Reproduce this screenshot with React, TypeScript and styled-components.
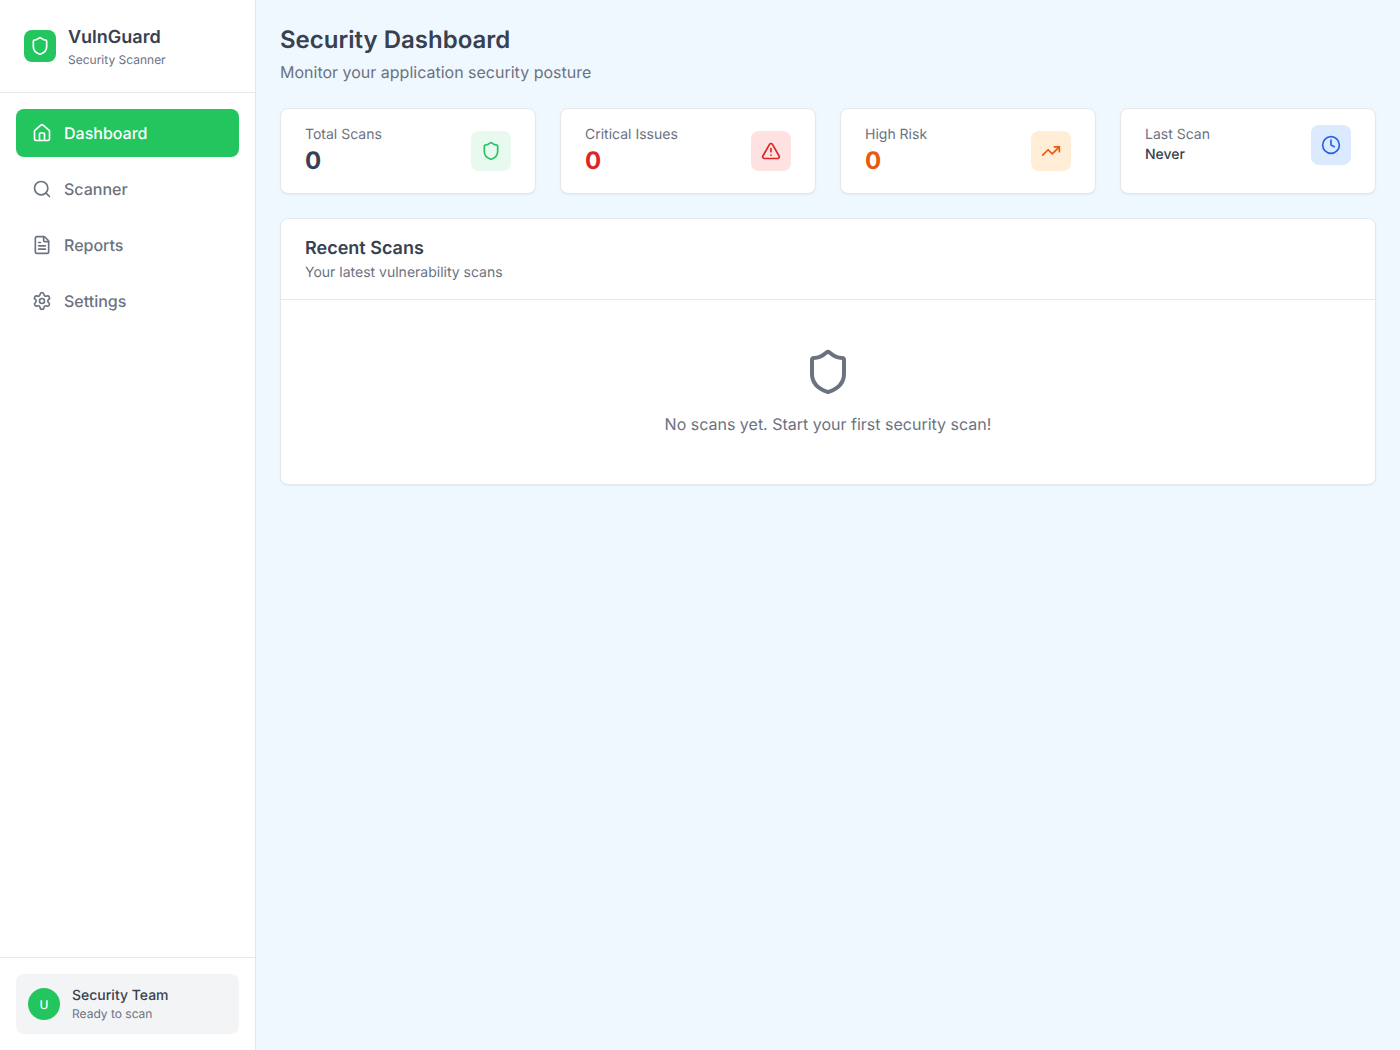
import React from 'react';
import styled, { createGlobalStyle } from 'styled-components';
import { Clock, FileText, House, Search, Settings, Shield, TrendingUp, TriangleAlert } from 'lucide-react';
import type { LucideIcon } from 'lucide-react';

const GlobalStyle = createGlobalStyle`
  html, body {
    margin: 0;
    padding: 0;
    height: 100%;
  }
  body {
    font-family: Inter, "Liberation Sans", sans-serif;
    text-rendering: geometricPrecision;
    -webkit-font-smoothing: antialiased;
    color: #374151;
    background: #f0f8ff;
  }
  * {
    box-sizing: border-box;
  }
`;

const Layout = styled.div`
  display: flex;
  height: 1050px;
  overflow: hidden;
`;

const Sidebar = styled.aside`
  display: flex;
  flex-direction: column;
  flex: none;
  width: 256px;
  background: #ffffff;
  border-right: 1px solid #e5e7eb;
`;

const Brand = styled.div`
  display: flex;
  align-items: center;
  gap: 12px;
  padding: 24px;
  border-bottom: 1px solid #e5e7eb;
`;

const BrandLogo = styled.div`
  display: flex;
  align-items: center;
  justify-content: center;
  width: 32px;
  height: 32px;
  border-radius: 8px;
  background: #22c55e;
  color: #ffffff;
`;

const BrandName = styled.div`
  font-size: 18px;
  line-height: 28px;
  font-weight: 600;
  color: #374151;
`;

const BrandTag = styled.div`
  font-size: 12px;
  line-height: 16px;
  color: #6b7280;
`;

const Nav = styled.nav`
  display: flex;
  flex-direction: column;
  flex: 1;
  gap: 8px;
  padding: 16px;
`;

const NavItem = styled.a<{ $active?: boolean }>`
  display: flex;
  align-items: center;
  gap: 12px;
  padding: 12px 16px;
  border-radius: 8px;
  font-size: 16px;
  line-height: 24px;
  font-weight: 500;
  cursor: pointer;
  background: ${props => (props.$active ? '#22c55e' : 'transparent')};
  color: ${props => (props.$active ? '#ffffff' : '#6b7280')};
`;

const SidebarFooter = styled.div`
  padding: 16px;
  border-top: 1px solid #e5e7eb;
`;

const UserCard = styled.div`
  display: flex;
  align-items: center;
  gap: 12px;
  padding: 12px;
  border-radius: 8px;
  background: #f3f4f6;
`;

const Avatar = styled.div`
  display: flex;
  align-items: center;
  justify-content: center;
  width: 32px;
  height: 32px;
  border-radius: 50%;
  background: #22c55e;
  color: #ffffff;
  font-size: 12px;
  font-weight: 500;
`;

const UserName = styled.div`
  font-size: 14px;
  line-height: 20px;
  font-weight: 500;
  color: #374151;
`;

const UserStatus = styled.div`
  font-size: 12px;
  line-height: 16px;
  color: #6b7280;
`;

const Main = styled.main`
  flex: 1;
  padding: 24px;
  background: #f0f8ff;
`;

const PageTitle = styled.h1`
  margin: 0;
  font-size: 24px;
  line-height: 32px;
  font-weight: 600;
  color: #374151;
`;

const PageSubtitle = styled.p`
  margin: 4px 0 24px;
  font-size: 16px;
  line-height: 24px;
  color: #6b7280;
`;

const StatGrid = styled.div`
  display: grid;
  grid-template-columns: repeat(4, 1fr);
  gap: 24px;
  margin-bottom: 24px;
`;

const StatCard = styled.div`
  display: flex;
  align-items: flex-start;
  justify-content: space-between;
  padding: 16px 24px;
  background: #ffffff;
  border: 1px solid #e5e7eb;
  border-radius: 8px;
  box-shadow: 0 1px 2px rgba(0, 0, 0, 0.05);
`;

const StatInner = styled.div`
  display: flex;
  align-items: center;
  justify-content: space-between;
  flex: 1;
`;

const StatLabel = styled.div`
  font-size: 14px;
  line-height: 20px;
  color: #6b7280;
`;

const StatValue = styled.div<{ $color: string }>`
  font-size: 24px;
  line-height: 32px;
  font-weight: 700;
  color: ${props => props.$color};
`;

const StatText = styled.div`
  font-size: 14px;
  line-height: 20px;
  font-weight: 500;
  color: #374151;
`;

const StatIcon = styled.div<{ $bg: string; $color: string }>`
  display: flex;
  align-items: center;
  justify-content: center;
  width: 40px;
  height: 40px;
  border-radius: 8px;
  background: ${props => props.$bg};
  color: ${props => props.$color};
`;

const Panel = styled.section`
  background: #ffffff;
  border: 1px solid #e5e7eb;
  border-radius: 8px;
  box-shadow: 0 1px 2px rgba(0, 0, 0, 0.05);
`;

const PanelHeader = styled.div`
  padding: 16px 24px;
  border-bottom: 1px solid #e5e7eb;
`;

const PanelTitle = styled.h2`
  margin: 0;
  font-size: 18px;
  line-height: 28px;
  font-weight: 600;
  color: #374151;
`;

const PanelSubtitle = styled.p`
  margin: 0;
  font-size: 14px;
  line-height: 20px;
  color: #6b7280;
`;

const EmptyState = styled.div`
  display: flex;
  flex-direction: column;
  align-items: center;
  gap: 16px;
  padding: 48px 24px;
  color: #6b7280;
`;

const EmptyText = styled.p`
  margin: 0;
  font-size: 16px;
  line-height: 24px;
  color: #6b7280;
`;

const navItems: { label: string; icon: LucideIcon; active?: boolean }[] = [
  { label: 'Dashboard', icon: House, active: true },
  { label: 'Scanner', icon: Search },
  { label: 'Reports', icon: FileText },
  { label: 'Settings', icon: Settings },
];

const stats = [
  { label: 'Total Scans', value: '0', color: '#374151', icon: Shield, bg: '#e8faef', fg: '#22c55e' },
  { label: 'Critical Issues', value: '0', color: '#dc2626', icon: TriangleAlert, bg: '#fee2e2', fg: '#dc2626' },
  { label: 'High Risk', value: '0', color: '#ea580c', icon: TrendingUp, bg: '#ffedd5', fg: '#ea580c' },
];

const App: React.FC = () => {
  return (
    <Layout>
      <GlobalStyle />
      <Sidebar>
        <Brand>
          <BrandLogo>
            <Shield size={20} />
          </BrandLogo>
          <div>
            <BrandName>VulnGuard</BrandName>
            <BrandTag>Security Scanner</BrandTag>
          </div>
        </Brand>
        <Nav>
          {navItems.map(({ label, icon: Icon, active }) => (
            <NavItem key={label} $active={active}>
              <Icon size={20} />
              {label}
            </NavItem>
          ))}
        </Nav>
        <SidebarFooter>
          <UserCard>
            <Avatar>U</Avatar>
            <div>
              <UserName>Security Team</UserName>
              <UserStatus>Ready to scan</UserStatus>
            </div>
          </UserCard>
        </SidebarFooter>
      </Sidebar>
      <Main>
        <PageTitle>Security Dashboard</PageTitle>
        <PageSubtitle>Monitor your application security posture</PageSubtitle>
        <StatGrid>
          {stats.map(({ label, value, color, icon: Icon, bg, fg }) => (
            <StatCard key={label}>
              <StatInner>
                <div>
                  <StatLabel>{label}</StatLabel>
                  <StatValue $color={color}>{value}</StatValue>
                </div>
                <StatIcon $bg={bg} $color={fg}>
                  <Icon size={20} />
                </StatIcon>
              </StatInner>
            </StatCard>
          ))}
          <StatCard>
            <StatInner>
              <div>
                <StatLabel>Last Scan</StatLabel>
                <StatText>Never</StatText>
              </div>
              <StatIcon $bg="#dbeafe" $color="#2563eb">
                <Clock size={20} />
              </StatIcon>
            </StatInner>
          </StatCard>
        </StatGrid>
        <Panel>
          <PanelHeader>
            <PanelTitle>Recent Scans</PanelTitle>
            <PanelSubtitle>Your latest vulnerability scans</PanelSubtitle>
          </PanelHeader>
          <EmptyState>
            <Shield size={48} />
            <EmptyText>No scans yet. Start your first security scan!</EmptyText>
          </EmptyState>
        </Panel>
      </Main>
    </Layout>
  );
};

export default App;
